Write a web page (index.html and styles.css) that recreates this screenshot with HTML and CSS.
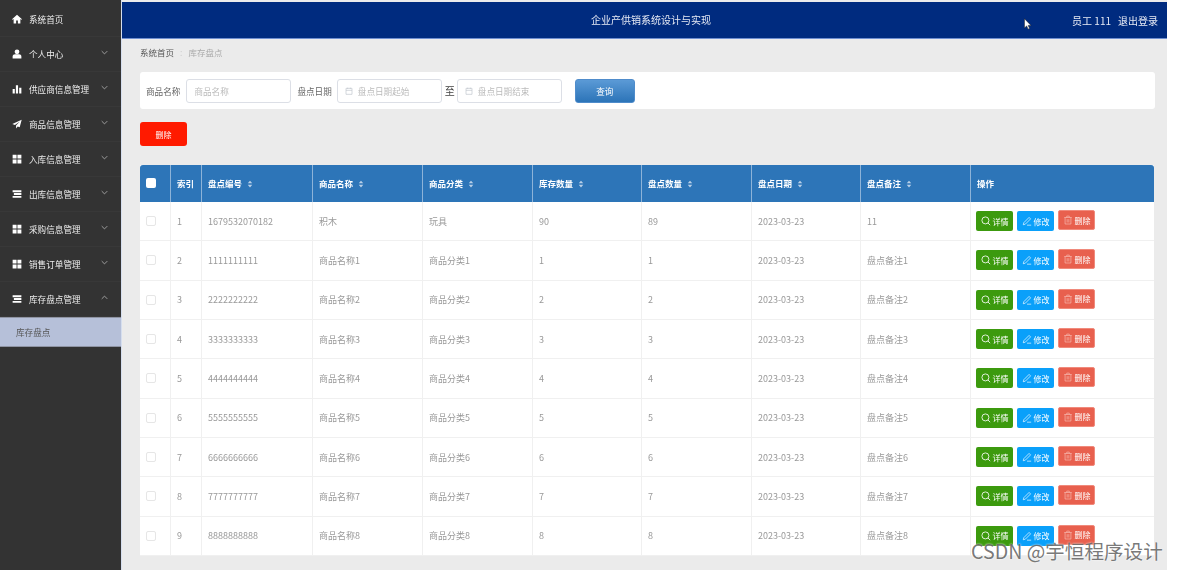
FILE: index.html
```html
<!DOCTYPE html>
<html lang="zh-CN">
<head>
    <meta charset="UTF-8">
    <title>库存盘点</title>
    <link rel="stylesheet" href="styles.css">
</head>
<body>
<svg class="sprite" xmlns="http://www.w3.org/2000/svg">
    <symbol id="i-home" viewBox="0 0 16 16"><path d="M8 1 0 8.200l1 1.100L2.600 8v7h4v-4.500h2.800V15h4V8L15 9.300l1-1.100z"/></symbol>
    <symbol id="i-user" viewBox="0 0 16 16"><circle cx="8" cy="4.500" r="3.800"/><path d="M1 15v-3c0-2.200 1.800-3.500 3.800-3.500h6.400c2 0 3.800 1.300 3.800 3.500v3z"/></symbol>
    <symbol id="i-bars" viewBox="0 0 16 16"><path d="M1 8h3.500v7H1zM6.200 2h3.500v13H6.200zM11.500 6H15v9h-3.500z"/></symbol>
    <symbol id="i-plane" viewBox="0 0 16 16"><path d="M15.500 1 0.500 8l4.200 1.700L12.500 4 6.500 10.500V15l2.600-3.200 3.200 1.400z"/></symbol>
    <symbol id="i-grid" viewBox="0 0 16 16"><path d="M1 1h6.300v6.300H1zM8.700 1H15v6.300H8.700zM1 8.700h6.300V15H1zM8.700 8.700H15V15H8.700z"/></symbol>
    <symbol id="i-tasks" viewBox="0 0 16 16"><path d="M1 2h14v3H1zM3 6.500h12v3H3zM1 11h14v3H1z"/></symbol>
    <symbol id="i-down" viewBox="0 0 10 6"><path d="M1 1l4 4 4-4" fill="none" stroke="currentColor" stroke-width="1.100"/></symbol>
    <symbol id="i-up" viewBox="0 0 10 6"><path d="M1 5l4-4 4 4" fill="none" stroke="currentColor" stroke-width="1.100"/></symbol>
    <symbol id="i-cal" viewBox="0 0 12 12"><path d="M1.500 2h9v9h-9zM1.500 5h9M4 1v2M8 1v2" fill="none" stroke="currentColor"/></symbol>
    <symbol id="i-sort" viewBox="0 0 8 10"><path d="M4 0.500 7 4H1zM4 9.500 1 6h6z"/></symbol>
    <symbol id="i-search" viewBox="0 0 12 12"><circle cx="5.300" cy="5.300" r="4.200" fill="none" stroke="currentColor"/><path d="M8.300 8.300 11 11" stroke="currentColor"/></symbol>
    <symbol id="i-edit" viewBox="0 0 12 12"><path d="M1.500 10.500 2.200 8 8.500 1.700l1.800 1.800L4 9.800zM6 11h5" fill="none" stroke="currentColor" stroke-width=".8"/></symbol>
    <symbol id="i-trash" viewBox="0 0 12 12"><path d="M1.500 3h9M4.500 3V1.300h3V3M2.500 3v7.800h7V3M5 5v4M7 5v4" fill="none" stroke="currentColor" stroke-width=".8"/></symbol>
</svg>

<div class="app">
    <aside class="sidebar">
        <a class="side-item"><svg class="side-icon"><use href="#i-home"/></svg><span>系统首页</span></a>
        <a class="side-item"><svg class="side-icon"><use href="#i-user"/></svg><span>个人中心</span><svg class="side-arrow"><use href="#i-down"/></svg></a>
        <a class="side-item"><svg class="side-icon"><use href="#i-bars"/></svg><span>供应商信息管理</span><svg class="side-arrow"><use href="#i-down"/></svg></a>
        <a class="side-item"><svg class="side-icon"><use href="#i-plane"/></svg><span>商品信息管理</span><svg class="side-arrow"><use href="#i-down"/></svg></a>
        <a class="side-item"><svg class="side-icon"><use href="#i-grid"/></svg><span>入库信息管理</span><svg class="side-arrow"><use href="#i-down"/></svg></a>
        <a class="side-item"><svg class="side-icon"><use href="#i-tasks"/></svg><span>出库信息管理</span><svg class="side-arrow"><use href="#i-down"/></svg></a>
        <a class="side-item"><svg class="side-icon"><use href="#i-grid"/></svg><span>采购信息管理</span><svg class="side-arrow"><use href="#i-down"/></svg></a>
        <a class="side-item"><svg class="side-icon"><use href="#i-grid"/></svg><span>销售订单管理</span><svg class="side-arrow"><use href="#i-down"/></svg></a>
        <a class="side-item"><svg class="side-icon"><use href="#i-tasks"/></svg><span>库存盘点管理</span><svg class="side-arrow"><use href="#i-up"/></svg></a>
        <a class="side-sub">库存盘点</a>
    </aside>

    <div class="main">
        <header class="topbar">
            <div class="topbar-title">企业产供销系统设计与实现</div>
            <div class="topbar-user"><span>员工 111</span><span>退出登录</span></div>
        </header>

        <div class="page">
            <div class="crumbs"><b>系统首页</b><i>:</i><span>库存盘点</span></div>

            <div class="search">
                <label>商品名称</label>
                <div class="field"><span>商品名称</span></div>
                <label class="label-date">盘点日期</label>
                <div class="field"><svg class="cal"><use href="#i-cal"/></svg><span>盘点日期起始</span></div>
                <label class="label-to">至</label>
                <div class="field"><svg class="cal"><use href="#i-cal"/></svg><span>盘点日期结束</span></div>
                <button class="btn-query">查询</button>
            </div>

            <button class="btn-remove">删除</button>

            <table class="grid">
                <colgroup>
                    <col class="c-check"><col class="c-index"><col class="c-no"><col class="c-wide"><col class="c-wide"><col class="c-mid"><col class="c-wide"><col class="c-mid"><col class="c-wide"><col>
                </colgroup>
                <thead>
                    <tr>
                        <th><span class="head-check"></span></th>
                        <th>索引</th>
                        <th>盘点编号<svg class="sort"><use href="#i-sort"/></svg></th>
                        <th>商品名称<svg class="sort"><use href="#i-sort"/></svg></th>
                        <th>商品分类<svg class="sort"><use href="#i-sort"/></svg></th>
                        <th>库存数量<svg class="sort"><use href="#i-sort"/></svg></th>
                        <th>盘点数量<svg class="sort"><use href="#i-sort"/></svg></th>
                        <th>盘点日期<svg class="sort"><use href="#i-sort"/></svg></th>
                        <th>盘点备注<svg class="sort"><use href="#i-sort"/></svg></th>
                        <th>操作</th>
                    </tr>
                </thead>
                <tbody>
                    <tr><td><span class="check"></span></td><td>1</td><td>1679532070182</td><td>积木</td><td>玩具</td><td>90</td><td>89</td><td>2023-03-23</td><td>11</td><td><div class="ops"><a class="op op-view"><svg><use href="#i-search"/></svg>详情</a><a class="op op-edit"><svg><use href="#i-edit"/></svg>修改</a><a class="op op-del"><svg><use href="#i-trash"/></svg>删除</a></div></td></tr>
                    <tr><td><span class="check"></span></td><td>2</td><td>1111111111</td><td>商品名称1</td><td>商品分类1</td><td>1</td><td>1</td><td>2023-03-23</td><td>盘点备注1</td><td><div class="ops"><a class="op op-view"><svg><use href="#i-search"/></svg>详情</a><a class="op op-edit"><svg><use href="#i-edit"/></svg>修改</a><a class="op op-del"><svg><use href="#i-trash"/></svg>删除</a></div></td></tr>
                    <tr><td><span class="check"></span></td><td>3</td><td>2222222222</td><td>商品名称2</td><td>商品分类2</td><td>2</td><td>2</td><td>2023-03-23</td><td>盘点备注2</td><td><div class="ops"><a class="op op-view"><svg><use href="#i-search"/></svg>详情</a><a class="op op-edit"><svg><use href="#i-edit"/></svg>修改</a><a class="op op-del"><svg><use href="#i-trash"/></svg>删除</a></div></td></tr>
                    <tr><td><span class="check"></span></td><td>4</td><td>3333333333</td><td>商品名称3</td><td>商品分类3</td><td>3</td><td>3</td><td>2023-03-23</td><td>盘点备注3</td><td><div class="ops"><a class="op op-view"><svg><use href="#i-search"/></svg>详情</a><a class="op op-edit"><svg><use href="#i-edit"/></svg>修改</a><a class="op op-del"><svg><use href="#i-trash"/></svg>删除</a></div></td></tr>
                    <tr><td><span class="check"></span></td><td>5</td><td>4444444444</td><td>商品名称4</td><td>商品分类4</td><td>4</td><td>4</td><td>2023-03-23</td><td>盘点备注4</td><td><div class="ops"><a class="op op-view"><svg><use href="#i-search"/></svg>详情</a><a class="op op-edit"><svg><use href="#i-edit"/></svg>修改</a><a class="op op-del"><svg><use href="#i-trash"/></svg>删除</a></div></td></tr>
                    <tr><td><span class="check"></span></td><td>6</td><td>5555555555</td><td>商品名称5</td><td>商品分类5</td><td>5</td><td>5</td><td>2023-03-23</td><td>盘点备注5</td><td><div class="ops"><a class="op op-view"><svg><use href="#i-search"/></svg>详情</a><a class="op op-edit"><svg><use href="#i-edit"/></svg>修改</a><a class="op op-del"><svg><use href="#i-trash"/></svg>删除</a></div></td></tr>
                    <tr><td><span class="check"></span></td><td>7</td><td>6666666666</td><td>商品名称6</td><td>商品分类6</td><td>6</td><td>6</td><td>2023-03-23</td><td>盘点备注6</td><td><div class="ops"><a class="op op-view"><svg><use href="#i-search"/></svg>详情</a><a class="op op-edit"><svg><use href="#i-edit"/></svg>修改</a><a class="op op-del"><svg><use href="#i-trash"/></svg>删除</a></div></td></tr>
                    <tr><td><span class="check"></span></td><td>8</td><td>7777777777</td><td>商品名称7</td><td>商品分类7</td><td>7</td><td>7</td><td>2023-03-23</td><td>盘点备注7</td><td><div class="ops"><a class="op op-view"><svg><use href="#i-search"/></svg>详情</a><a class="op op-edit"><svg><use href="#i-edit"/></svg>修改</a><a class="op op-del"><svg><use href="#i-trash"/></svg>删除</a></div></td></tr>
                    <tr><td><span class="check"></span></td><td>9</td><td>8888888888</td><td>商品名称8</td><td>商品分类8</td><td>8</td><td>8</td><td>2023-03-23</td><td>盘点备注8</td><td><div class="ops"><a class="op op-view"><svg><use href="#i-search"/></svg>详情</a><a class="op op-edit"><svg><use href="#i-edit"/></svg>修改</a><a class="op op-del"><svg><use href="#i-trash"/></svg>删除</a></div></td></tr>
                </tbody>
            </table>
        </div>
    </div>
</div>

<svg class="cursor" viewBox="0 0 9 13"><path d="M0.500 0.500v10.500l2.500-2.300 1.600 3.600 1.700-.8-1.600-3.400h3.200z" fill="#fff" stroke="#222" stroke-width=".6"/></svg>
<div class="watermark">CSDN @宇恒程序设计</div>
</body>
</html>
```

FILE: styles.css
```css
* {
    box-sizing: border-box;
}

html, body {
    margin: 0;
    height: 100%;
    overflow: hidden;
    background: #fff;
}

body {
    font-family: "Noto Sans CJK SC", "Liberation Sans", sans-serif;
    font-size: 9px;
    color: #999;
}

.sprite {
    display: none;
}

.app {
    display: flex;
    width: 1167px;
    height: 570px;
    filter: blur(0.45px);
}

/* sidebar */
.sidebar {
    width: 122px;
    flex: none;
    padding-top: 2px;
    background: #333;
    border-right: 1px solid #d5deee;
}

.side-item {
    display: flex;
    align-items: center;
    height: 35px;
    padding: 0 13px 0 12px;
    color: #eee;
    font-size: 8.600px;
    border-bottom: 1px solid #383838;
}

.side-icon {
    width: 10px;
    height: 10px;
    margin-right: 7px;
    fill: #fff;
}

.side-arrow {
    width: 7px;
    height: 5px;
    margin: -4px 0 0 auto;
    color: #bbb;
}

.side-sub {
    display: block;
    height: 30px;
    padding-left: 16px;
    line-height: 28px;
    font-size: 8.600px;
    color: #555;
    background: #b6c0d9;
    border-top: 1px solid #8f94a3;
    border-bottom: 1px solid #8f94a3;
}

/* main */
.main {
    flex: 1;
    display: flex;
    flex-direction: column;
    min-width: 0;
    background: #ebebeb;
}

.topbar {
    position: relative;
    display: flex;
    justify-content: flex-end;
    align-items: center;
    flex: none;
    height: 37px;
    margin-top: 2px;
    padding-right: 9px;
    color: #e6eaf4;
    font-size: 10px;
    background: #002b7f;
    border-bottom: 1px solid #6f8fd0;
}

.topbar-title {
    position: absolute;
    left: 469px;
    top: 10px;
    line-height: 16px;
}

.topbar-user {
    display: flex;
    gap: 7px;
}

.page {
    padding: 0 12px 0 18px;
}

.crumbs {
    display: flex;
    align-items: center;
    height: 25px;
    margin-bottom: 8px;
    font-size: 8.500px;
    color: #aaa;
}

.crumbs b {
    font-weight: 400;
    color: #555;
}

.crumbs i {
    margin: 0 6px;
    font-style: normal;
    color: #ccc;
}

/* search form */
.search {
    display: flex;
    align-items: center;
    height: 37px;
    padding: 0 6px;
    font-size: 8.600px;
    color: #666;
    background: #fff;
    border-radius: 3px;
}

.search label {
    margin-right: 6px;
}

.search .label-date {
    margin-left: 6px;
    margin-right: 5px;
}

.search .label-to {
    margin: 0 2px 0 3px;
    font-size: 10px;
    color: #444;
}

.field {
    display: flex;
    align-items: center;
    gap: 5px;
    width: 105px;
    height: 24px;
    padding-left: 7px;
    color: #bbb;
    background: #fff;
    border: 1px solid #dcdfe6;
    border-radius: 3px;
}

.cal {
    width: 8px;
    height: 8px;
    color: #c0c4cc;
}

.btn-query {
    width: 60px;
    height: 24px;
    margin-left: 13px;
    padding: 0;
    font: inherit;
    color: #fff;
    background: linear-gradient(#5b9ad6, #2c74b8);
    border: 1px solid #4f8ccb;
    border-radius: 3px;
}

.btn-remove {
    display: block;
    width: 47px;
    height: 24px;
    margin: 13px 0 19px;
    padding: 0;
    font: inherit;
    font-size: 8px;
    color: #fff;
    background: #ff1a00;
    border: none;
    border-radius: 3px;
}

/* table */
.grid {
    width: 1014px;
    table-layout: fixed;
    border-collapse: separate;
    border-spacing: 0;
    background: #fff;
}

.c-check {
    width: 30px;
}

.c-index {
    width: 31px;
}

.c-no {
    width: 111px;
}

.c-wide {
    width: 110px;
}

.c-mid {
    width: 109px;
}

.grid th {
    height: 37px;
    padding: 0 0 2px 6px;
    text-align: left;
    font-size: 8.500px;
    font-weight: 700;
    color: #fff;
    background: #2d75b8;
    border-left: 1px solid #8db3d8;
}

.grid th:first-child {
    border-left: none;
    border-radius: 3px 0 0 0;
}

.grid th:last-child {
    border-radius: 0 3px 0 0;
}

.grid td {
    height: 39.330px;
    padding: 0 0 0 6px;
    font-size: 9px;
    color: #999;
    border-left: 1px solid #f0f0f0;
    border-bottom: 1px solid #f0f0f0;
}

.grid td:first-child {
    border-left: none;
}

.grid td:last-child {
    padding-left: 5px;
}

.sort {
    width: 6px;
    height: 8px;
    margin-left: 5px;
    vertical-align: -1px;
    fill: #b9d0e8;
}

.head-check, .check {
    display: block;
    width: 10px;
    height: 10px;
    border-radius: 2px;
}

.head-check {
    background: #fff;
}

.check {
    border: 1px solid #e6e6e6;
}

.ops {
    display: flex;
    gap: 4px;
}

.op {
    display: flex;
    align-items: center;
    justify-content: center;
    gap: 2px;
    width: 37px;
    height: 20px;
    font-size: 8px;
    color: #fff;
    border-radius: 2px;
}

.op svg {
    width: 10px;
    height: 10px;
}

.op-view {
    background: #3c9a0e;
}

.op-edit {
    background: #0aa0fa;
}

.op-del {
    margin-top: -1px;
    background: #e8604e;
    border: 1px solid #f08a7c;
}

.op-del svg {
    color: #f7bdb4;
}

/* overlays */
.cursor {
    position: absolute;
    left: 1024px;
    top: 18px;
    width: 8px;
    height: 12px;
}

.watermark {
    position: absolute;
    left: 971px;
    top: 538px;
    font-size: 19.600px;
    line-height: 26px;
    white-space: nowrap;
    color: rgba(85, 85, 85, 0.8);
    text-shadow: 0 0 2px #fff;
}
```
